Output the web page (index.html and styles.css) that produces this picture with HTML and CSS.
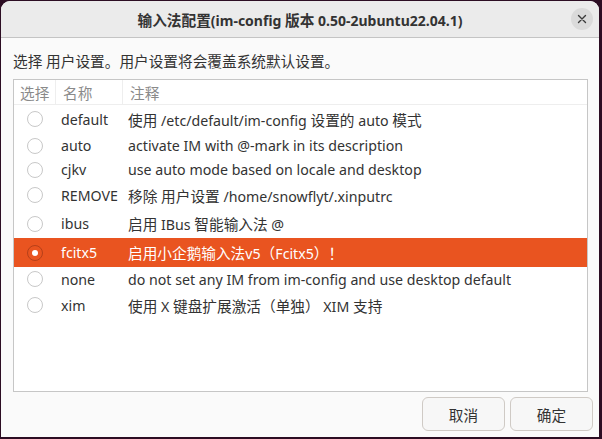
FILE: index.html
```html
<!DOCTYPE html>
<html>
<head>
<meta charset="utf-8">
<link rel="stylesheet" href="styles.css">
</head>
<body>
<div class="window">
  <div class="titlebar">
    <div class="title"><span class="zh">输入法配置</span>(im-config <span class="zh">版本</span> 0.50-2ubuntu22.04.1)</div>
    <div class="close"><svg width="10" height="10" viewBox="0 0 10 10"><path d="M1.5 1.5 L8.5 8.5 M8.5 1.5 L1.5 8.5" stroke="#3a3a3a" stroke-width="1.4" stroke-linecap="round"/></svg></div>
  </div>
  <div class="content">
    <div class="prompt zh">选择 用户设置。用户设置将会覆盖系统默认设置。</div>
    <div class="tree">
      <div class="head zh">
        <div class="c1">选择</div>
        <div class="c2">名称</div>
        <div class="c3">注释</div>
      </div>
      <div class="row h28"><div class="c1"><span class="radio"></span></div><div class="c2">default</div><div class="c3"><span class="zh">使用</span> /etc/default/im-config <span class="zh">设置的</span> auto <span class="zh">模式</span></div></div>
      <div class="row h25"><div class="c1"><span class="radio"></span></div><div class="c2">auto</div><div class="c3">activate IM with @-mark in its description</div></div>
      <div class="row h23"><div class="c1"><span class="radio"></span></div><div class="c2">cjkv</div><div class="c3">use auto mode based on locale and desktop</div></div>
      <div class="row h28"><div class="c1"><span class="radio"></span></div><div class="c2">REMOVE</div><div class="c3"><span class="zh">移除 用户设置</span> /home/snowflyt/.xinputrc</div></div>
      <div class="row h29"><div class="c1"><span class="radio"></span></div><div class="c2">ibus</div><div class="c3"><span class="zh">启用</span> IBus <span class="zh">智能输入法</span> @</div></div>
      <div class="row h29 selected"><div class="c1"><span class="radio on"></span></div><div class="c2">fcitx5</div><div class="c3"><span class="zh">启用小企鹅输入法</span>v5<span class="zh">（</span>Fcitx5<span class="zh">）！</span></div></div>
      <div class="row h24"><div class="c1"><span class="radio"></span></div><div class="c2">none</div><div class="c3">do not set any IM from im-config and use desktop default</div></div>
      <div class="row h28"><div class="c1"><span class="radio"></span></div><div class="c2">xim</div><div class="c3"><span class="zh">使用</span> X <span class="zh">键盘扩展激活（单独）</span> XIM <span class="zh">支持</span></div></div>
    </div>
    <div class="buttons zh">
      <div class="btn">取消</div>
      <div class="btn">确定</div>
    </div>
  </div>
</div>
</body>
</html>
```

FILE: styles.css
```css
html, body {
  margin: 0;
  padding: 0;
  background: #2c0d23;
}
body {
  padding: 1px 0 0 1px;
  font-family: "Noto Sans", "Noto Sans CJK SC", sans-serif;
  font-size: 14.2px;
  color: #333333;
}
.zh {
  font-size: 14.67px;
}
.window {
  width: 598px;
  height: 436px;
  background: #fafafa;
  border-radius: 9px 9px 0 0;
  overflow: hidden;
  display: flex;
  flex-direction: column;
}
.titlebar {
  height: 36px;
  flex: none;
  background: #ebebeb;
  border-bottom: 1px solid #c4c4c4;
  display: flex;
  align-items: center;
  justify-content: center;
  position: relative;
}
.title {
  font-weight: bold;
  font-size: 14px;
  color: #333;
}
.close {
  position: absolute;
  right: 6px;
  top: 7px;
  width: 22px;
  height: 22px;
  border-radius: 50%;
  background: #dadada;
  display: flex;
  align-items: center;
  justify-content: center;
}
.content {
  flex: 1;
  display: flex;
  flex-direction: column;
  padding: 0 11px 0 12px;
}
.prompt {
  height: 41px;
  line-height: 20px;
  padding-top: 13px;
  box-sizing: border-box;
}
.tree {
  height: 313px;
  box-sizing: border-box;
  border: 1px solid #c6c6c6;
  background: #ffffff;
}
.head {
  display: flex;
  height: 24px;
  align-items: center;
  border-bottom: 1px solid #eeeeee;
  color: #8a8a8a;
}
.head > div {
  height: 100%;
  display: flex;
  align-items: center;
  box-sizing: border-box;
}
.head .c1 { padding-left: 6px; border-right: 1px solid #eeeeee; }
.head .c2 { padding-left: 7px; border-right: 1px solid #eeeeee; }
.head .c3 { padding-left: 7px; }
.c1 { width: 42px; flex: none; }
.c2 { width: 67px; flex: none; padding-left: 5px; box-sizing: border-box; }
.c3 { flex: 1; padding-left: 5px; white-space: nowrap; }
.row {
  display: flex;
  align-items: center;
}
.row .c1 { display: flex; justify-content: center; }
.h23 { height: 23px; }
.h24 { height: 24px; }
.h25 { height: 25px; }
.h28 { height: 28px; }
.h29 { height: 29px; }
.radio {
  width: 14px;
  height: 14px;
  border-radius: 50%;
  border: 1px solid #c8c8c8;
  background: #fff;
}
.selected {
  background: #e95420;
  color: #ffffff;
}
.radio.on {
  background: #e95420;
  border-color: #b6401a;
  position: relative;
}
.radio.on::after {
  content: "";
  position: absolute;
  left: 4px;
  top: 4px;
  width: 6px;
  height: 6px;
  border-radius: 50%;
  background: #fff;
}
.buttons {
  flex: 1;
  display: flex;
  justify-content: flex-end;
  align-items: flex-start;
  gap: 5px;
  padding-top: 5px;
  margin-right: -5px;
}
.btn {
  width: 83px;
  height: 34px;
  box-sizing: border-box;
  border: 1px solid #cfcac5;
  border-radius: 6px;
  background: #f7f7f7;
  display: flex;
  align-items: center;
  justify-content: center;
  color: #333;
}
```
